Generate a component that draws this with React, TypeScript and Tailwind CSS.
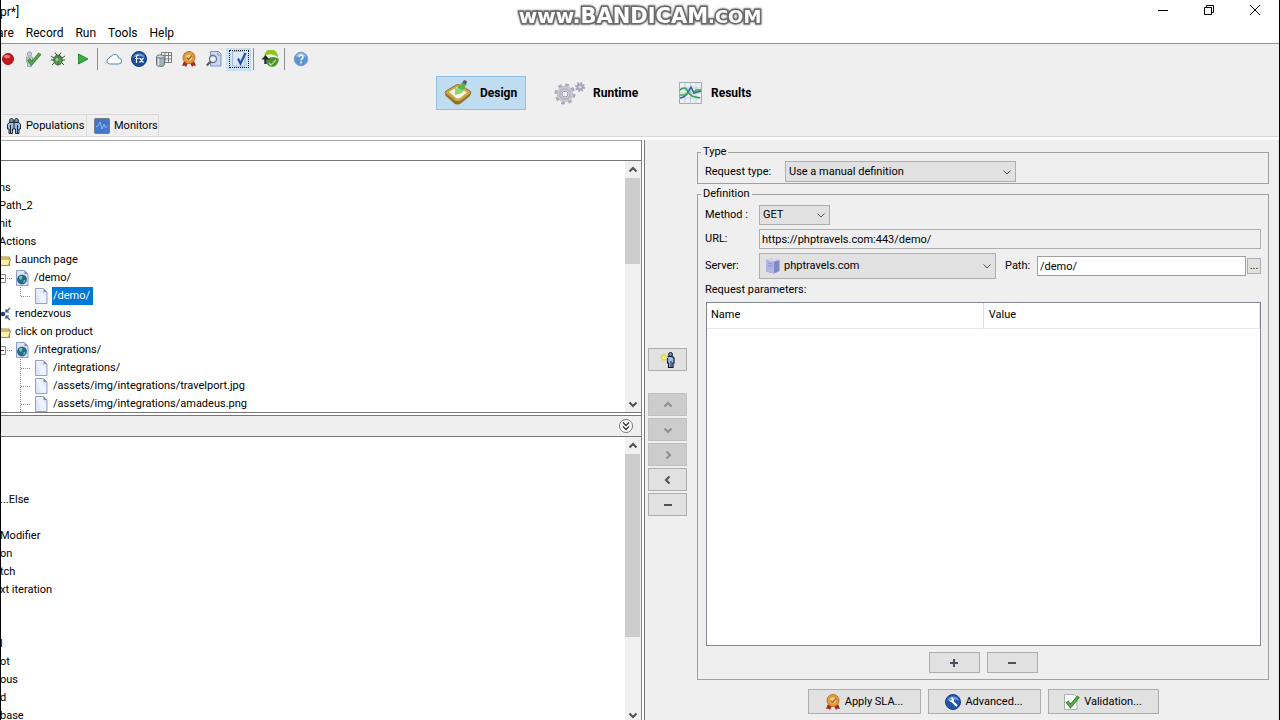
import type { ReactNode } from 'react';

const BTN = 'flex items-center justify-center border border-[#adadad] bg-[#e1e1e1]';
const BTN_OFF = 'flex items-center justify-center border border-[#bfbfbf] bg-[#cccccc]';
const LINE = '#1d3f8f';

function Svg({ children, size = 16 }: { children: ReactNode; size?: number }) {
  return (
    <svg width={size} height={size} viewBox="0 0 16 16" fill="none" className="shrink-0" aria-hidden="true">
      {children}
    </svg>
  );
}

function RecordIcon() {
  return (
    <Svg>
      <circle cx="8" cy="8" r="5.5" fill="#c8161d" stroke="#8f1a1a" />
      <ellipse cx="7" cy="5.5" rx="3" ry="1.8" fill="#ea7a78" />
    </Svg>
  );
}

function UserCheckIcon() {
  return (
    <Svg>
      <circle cx="4.5" cy="3" r="2.2" fill="#c3ccd6" stroke="#8d99a5" strokeWidth=".8" />
      <path d="M1.5 6h6v5h-1v4.5h-4V11h-1z" fill="#c3ccd6" stroke="#8d99a5" strokeWidth=".8" />
      <path d="M3.5 8l3 4.5L15 2.5" stroke="#2f7d2c" strokeWidth="3.4" />
      <path d="M3.5 8l3 4.5L15 2.5" stroke="#58ad4c" strokeWidth="1.8" />
    </Svg>
  );
}

function BugIcon() {
  return (
    <Svg>
      <path d="M1 5l3 2M15 5l-3 2M1 9h14M2 14l3-3M14 14l-3-3M5 1.500l2 3M11 1.500l-2 3" stroke="#3f4a35" />
      <ellipse cx="8" cy="9" rx="4.200" ry="5" fill="#5c9a55" stroke="#345f31" />
      <path d="M5 6h6M8 6v8" stroke="#345f31" strokeWidth=".8" />
      <ellipse cx="7" cy="8.500" rx="1.500" ry="2" fill="#95c88b" />
    </Svg>
  );
}

function PlayIcon() {
  return (
    <Svg>
      <path d="M3.500 3l9.500 5-9.500 5z" fill="#3fae3c" stroke="#2c8a35" />
    </Svg>
  );
}

function CloudIcon() {
  return (
    <Svg>
      <path d="M3.500 13a3 3 0 0 1-.3-5.900 2.500 2.500 0 0 1 2.300-2 3.800 3.800 0 0 1 7 1.900 3 3 0 0 1 .2 6z" fill="#f8fbfd" stroke="#5b87a5" />
    </Svg>
  );
}

function FxIcon() {
  return (
    <Svg>
      <circle cx="8" cy="8" r="7.500" fill="#1c4f9c" stroke="#173c78" />
      <path d="M2 6.500a6.500 6.500 0 0 1 12 0q-6-3-12 0z" fill="#6f9bd2" />
      <path d="M7.500 4.500c-2-.5-2 1-2 2.500v5M4 7.500h3.500M8.500 7l4 4.500M12.500 7l-4 4.500" stroke="#fff" strokeWidth="1.200" />
    </Svg>
  );
}

function DataIcon() {
  return (
    <Svg>
      <path d="M5.500 1.500h10v10h-10zM5.500 4.500h10M5.500 8h10M9 1.500v10M12.500 1.500v10" fill="#f4f4f4" stroke="#7c7c7c" />
      <path d="M.5 5.500v8c0 2.500 8 2.500 8 0v-8" fill="#a3b1b5" stroke="#667479" />
      <path d="M2.500 7v7.500" stroke="#dce3e5" strokeWidth="1.500" />
      <ellipse cx="4.500" cy="5.500" rx="4" ry="1.600" fill="#cfd8da" stroke="#667479" />
    </Svg>
  );
}

function MedalIcon() {
  return (
    <Svg>
      <path d="M3 10L1 15l2.500-.5 1.500 1.500 2-4zM13 10l2 5-2.500-.5L11 16l-2-4z" fill="#a62a1e" />
      <circle cx="8" cy="6.500" r="6" fill="#e79a3a" stroke="#b87525" />
      <circle cx="8" cy="6.500" r="3.800" fill="#f7cc85" stroke="#d18a32" strokeWidth=".8" />
      <path d="M5.500 6.500l2 2 3.500-4" stroke="#a86317" strokeWidth="1.200" />
    </Svg>
  );
}

function SearchDocIcon() {
  return (
    <Svg>
      <path d="M4.500.5h8l2.500 2.500v12H4.500z" fill="#c9d8f0" stroke="#7b93c2" />
      <path d="M12 .5V4h3" fill="#fff" stroke="#7b93c2" />
      <circle cx="7" cy="8" r="3.500" fill="#e9f1fb" stroke="#68717f" strokeWidth="1.300" />
      <path d="M4.500 10.500L.8 14.500" stroke="#555e6c" strokeWidth="2.200" />
    </Svg>
  );
}

function CheckDocIcon() {
  return (
    <Svg>
      <path d="M1.500.5h10l2.500 2.500v12H1.500z" fill="#dbe7f7" stroke="#a4bbdb" />
      <path d="M7 7.500l2.500 5L14.500 2" stroke="#2352a8" strokeWidth="2.200" />
    </Svg>
  );
}

function UpdateIcon() {
  return (
    <svg width="18" height="18" viewBox="0 0 18 18" fill="none" aria-hidden="true">
      <path d="M3 6a7 7 0 0 1 14 1q-7-5-14-1z" fill="#8fc31f" />
      <path d="M6 9q6-4 12 0-1 7-7 8-3 0-5-3z" fill="#4c8f2f" />
      <path d="M8 13l2 2 5-5" stroke="#b7dd7a" strokeWidth="1.300" />
      <path d="M4.500 14V9" stroke="#1f2b22" strokeWidth="2.400" />
      <path d="M.5 9.500l4-4.500 4 4.500z" fill="#1f2b22" />
    </svg>
  );
}

function HelpIcon() {
  return (
    <Svg>
      <circle cx="8" cy="8" r="6.800" fill="#5d93d2" stroke="#7fa5cf" />
      <path d="M2.800 6a5.500 5.500 0 0 1 10.400 0q-5-2-10.400 0z" fill="#a2c4e9" />
      <path d="M6 6.200c0-2.600 4.200-2.400 4 0-.1 1.300-1.900 1.500-1.900 3" stroke="#fff" strokeWidth="1.500" />
      <circle cx="8" cy="11.500" r="1" fill="#fff" />
    </Svg>
  );
}

function PopulationIcon() {
  return (
    <Svg>
      <path d="M4 5C3 2 4 .5 5.500.5S8 2 7 5M9 5C8 2 9 .5 10.500.5S13 2 12 5" fill="#6f8fae" stroke="#1e2732" />
      <path d="M1.500 6.500L3 4.500h10l1.500 2v4.500H13v4.500H9.500V11h-3v4.500H3V11H1.500z" fill="#9dbbe0" stroke="#1e2732" />
      <path d="M4.500 7v8M11.500 7v8M8 5v6" stroke="#1e2732" />
    </Svg>
  );
}

function MonitorIcon() {
  return (
    <Svg>
      <rect x=".5" y=".5" width="15" height="15" rx="1" fill="#4376c6" stroke="#777b85" />
      <path d="M2 9l2-1 2-4 2 7 2-5 1.500 4L14 7.500" stroke="#8db8ee" />
    </Svg>
  );
}

function FolderIcon() {
  return (
    <Svg>
      <path d="M1 13.500v-10h5l1 1.500h7.500v8.500z" fill="#f7e191" stroke="#a98b3a" />
      <path d="M1 13.500L4 7h11.500l-2 6.500z" fill="#fdf0a8" stroke="#a98b3a" />
    </Svg>
  );
}

function PageIcon({ globe = false }: { globe?: boolean }) {
  return (
    <Svg>
      <path d="M2.500.5h8L14 4v11.500H2.500z" fill={globe ? '#cfdcee' : '#dfe6fa'} stroke="#93a0c4" />
      <path d="M3 1l7 0 0 4 3 3v7H8z" fill={globe ? '#dfe8f4' : '#eef2fd'} />
      <path d="M10.500.5V4H14z" fill="#7f8fba" />
      {globe && (
        <>
          <circle cx="8" cy="9.500" r="4.500" fill="#1f6d8d" stroke="#174866" strokeWidth=".7" />
          <path d="M5 7.500c1-2 3-2 3.500-1s-1 1-1 2.500-2 1-2.500-1.500zM9.500 10.500l2-1c0 2-1 3-2 3.500z" fill="#7fc3b1" />
        </>
      )}
    </Svg>
  );
}

function RendezvousIcon() {
  return (
    <Svg>
      <circle cx="8" cy="8" r="2.300" fill={LINE} />
      <path d="M15 2l-3.500 3.500M11 3v3h3M15 14l-3.500-3.500M11 13v-3h3" stroke="#3c5578" strokeWidth="1.200" />
    </Svg>
  );
}

function ServerIcon() {
  return (
    <Svg>
      <path d="M1 2L6 .5l8.500 1.500v11L9 15.500l-8-2z" fill="#8288c4" />
      <path d="M1 2l8 1.500v12l-8-2z" fill="#b0b5e4" />
      <path d="M1 2L6 .5l8.500 1.500L9 3.500z" fill="#d8daf4" />
      <path d="M2.500 5l5 1M2.500 7.500l5 1" stroke="#8e94cf" />
    </Svg>
  );
}

function WrenchIcon() {
  return (
    <Svg>
      <circle cx="8" cy="8" r="7.500" fill="#1f56ac" stroke="#1a3d7e" />
      <path d="M2 6.500a6.500 6.500 0 0 1 12 0q-6-2-12 0z" fill="#6d9cdc" />
      <path d="M7 7l5 5" stroke="#fff" strokeWidth="2.200" />
      <path d="M4 5.500l2 1L7 5.500 5.800 3.500c2-.5 4 1.500 3 4-1.500 1.500-4.500.5-4.800-2z" fill="#fff" />
    </Svg>
  );
}

function ValidIcon() {
  return (
    <Svg>
      <path d="M.5.500h10L13 3v12.500H.5z" fill="#fff" stroke="#a8b4a8" />
      <path d="M3 7.500l3.500 4.500L14.500 2.500" stroke="#2c8128" strokeWidth="3.400" />
      <path d="M3 7.500l3.500 4.500L14.500 2.500" stroke="#57ab48" strokeWidth="1.800" />
    </Svg>
  );
}

function NewUserIcon() {
  return (
    <Svg>
      <circle cx="10.500" cy="2.500" r="2" fill="#6f8fae" stroke="#10192b" />
      <path d="M7.500 5.500L8.500 4.500h4l1.500 1.500v5h-1v4.500H8.500V11h-1z" fill="#9dbbe0" stroke="#10192b" strokeWidth="1.200" />
      <path d="M11 9v6.500" stroke="#10192b" />
      <path d="M4 1v9M-.5 5.500h9M1 2.500l6 6M7 2.500l-6 6" stroke="#e6dc1a" />
      <circle cx="4" cy="5.500" r="2.200" fill="#fbf66a" stroke="#d6cb1a" strokeWidth=".6" />
    </Svg>
  );
}

function DesignIcon() {
  return (
    <svg width="28" height="28" viewBox="0 0 28 28" fill="none" aria-hidden="true">
      <path d="M1 14q0 3 2 4l8 7q3 1 5 0l10-8q1-2 1-4z" fill="#8e6f26" />
      <path d="M2 12l10-6q2-1 4 0l10 6q2 2 0 3l-9 7q-3 1.500-6 0l-9-7q-2-1.500 0-3z" fill="#caa64b" stroke="#94752b" />
      <path d="M5 13l9-5.500 9 6-7 5.500q-2 1-4 0z" fill="#fbf6e6" />
      <path d="M13 9l5-5 4 2-3 6z" fill="#55b947" />
      <path d="M11 9l9 2-2 3-7 2z" fill="#8ad873" />
      <path d="M18 4l2-3 3 1-1 4z" fill="#5d5d66" />
    </svg>
  );
}

function GearsIcon() {
  return (
    <svg width="32" height="28" viewBox="0 0 32 28" fill="none" aria-hidden="true">
      <circle cx="12" cy="15" r="9" stroke="#a9a9b8" strokeWidth="3" strokeDasharray="3.540 3.530" />
      <circle cx="12" cy="15" r="6" fill="#efeff3" stroke="#b9b9c7" strokeWidth="4.500" />
      <circle cx="12" cy="15" r="7" stroke="#d3d3de" />
      <circle cx="12" cy="15" r="3" fill="#efefef" stroke="#9696a6" />
      <circle cx="27" cy="8" r="4" stroke="#a3a3b8" strokeWidth="2" strokeDasharray="1.570 1.570" />
      <circle cx="27" cy="8" r="2.600" fill="#dcdce8" stroke="#a3a3b8" strokeWidth="2" />
    </svg>
  );
}

function ResultsIcon() {
  return (
    <svg width="24" height="24" viewBox="0 0 24 24" fill="none" aria-hidden="true">
      <path d="M.5 1.500h22v21H.5z" fill="#edf1f5" stroke="#a3a9b3" />
      <path d="M.5 7h22M.5 12h22M.5 17h22M6 1.500v21M11.500 1.500v21M17 1.500v21" stroke="#c7cdd6" />
      <path d="M1 9q5-4 7 0t5 6l8 2" stroke="#35a24c" strokeWidth="1.700" />
      <path d="M1 17q6-1 8-6l3-5 3 6 7-2" stroke="#2a62ad" strokeWidth="1.500" />
      <path d="M1 14h5l4-3M14 13l3-4h5" stroke="#35a24c" strokeWidth="1.300" />
    </svg>
  );
}

type Dir = 'up' | 'down' | 'left' | 'right';

const CHEVRONS: Record<Dir, string> = {
  up: 'M1.500 6.500L5 3l3.500 3.500',
  down: 'M1.500 3.500L5 7l3.500-3.500',
  left: 'M6.500 1.500L3 5l3.500 3.500',
  right: 'M3.500 1.500L7 5 3.500 8.500',
};

function Chevron({ dir, color = '#505050', weight = 2 }: { dir: Dir; color?: string; weight?: number }) {
  return (
    <svg width="10" height="10" viewBox="0 0 10 10" fill="none" className="shrink-0" aria-hidden="true">
      <path d={CHEVRONS[dir]} stroke={color} strokeWidth={weight} />
    </svg>
  );
}

function SignIcon({ plus = false, color = '#4a4f5c' }: { plus?: boolean; color?: string }) {
  return (
    <svg width="10" height="10" viewBox="0 0 10 10" aria-hidden="true">
      <path d={plus ? 'M1 5h8M5 1v8' : 'M1 5h8'} stroke={color} strokeWidth="2" />
    </svg>
  );
}

const toolbar: { label: string; icon: ReactNode; active?: boolean; sep?: boolean }[] = [
  { label: 'Start recording', icon: <RecordIcon /> },
  { label: 'Check virtual user', icon: <UserCheckIcon /> },
  { label: 'Debug', icon: <BugIcon /> },
  { label: 'Run', icon: <PlayIcon />, sep: true },
  { label: 'Cloud', icon: <CloudIcon /> },
  { label: 'Variables', icon: <FxIcon /> },
  { label: 'Servers', icon: <DataIcon /> },
  { label: 'SLA profiles', icon: <MedalIcon /> },
  { label: 'Search', icon: <SearchDocIcon /> },
  { label: 'Validation', icon: <CheckDocIcon />, active: true, sep: true },
  { label: 'Update', icon: <UpdateIcon />, sep: true },
  { label: 'Help', icon: <HelpIcon /> },
];

interface TreeNode {
  text: string;
  level: number;
  icon?: ReactNode;
  selected?: boolean;
  last?: boolean;
}

const tree: TreeNode[] = [
  { text: '', level: 0 },
  { text: 'ns', level: 0 },
  { text: 'Path_2', level: 0 },
  { text: 'nit', level: 0 },
  { text: 'Actions', level: 0 },
  { text: 'Launch page', level: 1, icon: <FolderIcon /> },
  { text: '/demo/', level: 2, icon: <PageIcon globe /> },
  { text: '/demo/', level: 3, icon: <PageIcon />, selected: true, last: true },
  { text: 'rendezvous', level: 1, icon: <RendezvousIcon /> },
  { text: 'click on product', level: 1, icon: <FolderIcon /> },
  { text: '/integrations/', level: 2, icon: <PageIcon globe /> },
  { text: '/integrations/', level: 3, icon: <PageIcon /> },
  { text: '/assets/img/integrations/travelport.jpg', level: 3, icon: <PageIcon /> },
  { text: '/assets/img/integrations/amadeus.png', level: 3, icon: <PageIcon /> },
];

const actions = [
  '', '', '', '...Else', '', 'Modifier', 'on', 'tch', 'xt iteration', '', '', 'l', 'ot', 'ous', 'd', 'base',
];

function TreeRow({ text, level, icon, selected, last }: TreeNode) {
  if (level === 0) {
    return <li className="-ml-0.5 h-[18px] leading-[18px]">{text}</li>;
  }
  return (
    <li className={`flex h-[18px] items-center gap-[3px] ${level === 1 ? '-ml-1.5' : ''}`}>
      <span className="flex shrink-0 items-center">
        {level === 2 && (
          <svg width="13" height="18" viewBox="0 0 13 18" fill="none" aria-hidden="true">
            <path d="M-3.500 5.500h8v8h-8z" fill="#fff" stroke="#8a8a8a" />
            <path d="M-2 9.500h5" stroke="#333" />
            <path d="M6 9.500h5" stroke="#8a8a8a" strokeDasharray="1 1" />
          </svg>
        )}
        {level === 3 && (
          <svg width="32" height="18" viewBox="0 0 32 18" fill="none" aria-hidden="true">
            <path d={last ? 'M19.500 0v10' : 'M19.500 0v18'} stroke="#8a8a8a" strokeDasharray="1 1" />
            <path d="M20 9.500h9" stroke="#8a8a8a" strokeDasharray="1 1" />
          </svg>
        )}
        {icon}
      </span>
      <span className={`px-px leading-[18px] whitespace-nowrap ${selected ? 'bg-[#0078d7] pr-[3px] text-white' : ''}`}>
        {text}
      </span>
    </li>
  );
}

function ScrollBar({ thumb, below }: { thumb: string; below: string }) {
  return (
    <div className="flex w-4 shrink-0 flex-col items-center bg-[#f0f0f0] pr-px">
      <span className="flex h-[17px] shrink-0 items-center">
        <Chevron dir="up" />
      </span>
      <div className={`w-[15px] shrink-0 bg-[#cdcdcd] ${thumb}`} />
      <div className={`flex flex-1 items-end ${below}`}>
        <Chevron dir="down" />
      </div>
    </div>
  );
}

interface DropDownProps {
  id: string;
  value: string;
  box: string;
  field?: string;
  icon?: ReactNode;
}

function DropDown({ id, value, box, field = 'pl-[3px]', icon }: DropDownProps) {
  return (
    <div className={`relative ${box}`}>
      {icon && <span className="pointer-events-none absolute inset-y-0 left-1.5 flex items-center">{icon}</span>}
      <select id={id} className={`h-full w-full appearance-none border border-[#adadad] bg-[#e1e1e1] ${field}`}>
        <option>{value}</option>
      </select>
      <span className="pointer-events-none absolute inset-y-0 right-1 flex items-center">
        <Chevron dir="down" weight={1} />
      </span>
    </div>
  );
}

function TitleBar() {
  return (
    <header className="shrink-0 border-b border-[#8e938e] bg-white text-[12px]">
      <div className="flex h-6 items-start justify-between">
        <h1 className="-ml-px leading-6">pr*]</h1>
        <div className="mr-px flex">
          <button aria-label="Minimize" className="flex h-5 w-[46px] items-center justify-center">
            <svg width="10" height="10" viewBox="0 0 10 10"><path d="M0 5.500h10" stroke="#000" /></svg>
          </button>
          <button aria-label="Restore" className="flex h-5 w-[46px] items-center justify-center">
            <svg width="10" height="10" viewBox="0 0 10 10" fill="none">
              <path d="M.5 2.500h7v7h-7zM2.500 2.500v-2h7v7h-2" stroke="#000" />
            </svg>
          </button>
          <button aria-label="Close" className="flex h-5 w-[46px] items-center justify-center">
            <svg width="10" height="10" viewBox="0 0 10 10"><path d="M0 0l10 10M10 0L0 10" stroke="#000" /></svg>
          </button>
        </div>
      </div>
      <nav className="-ml-1 flex h-[19px] items-center gap-3 leading-[19px]">
        <button>are</button>
        <button>Record</button>
        <button>Run</button>
        <button>Tools</button>
        <button>Help</button>
      </nav>
    </header>
  );
}

function Toolbar() {
  return (
    <div className="-ml-1.5 flex h-[30px] items-center">
      {toolbar.map(({ label, icon, active, sep }) => (
        <div key={label} className="flex items-center">
          <button
            aria-label={label}
            className={`flex h-[23px] w-[25px] items-center justify-center ${active ? 'border border-[#c0dcf0] bg-[#cfe4f5]' : ''}`}
          >
            {active ? <span className="flex border border-dotted border-black px-px">{icon}</span> : icon}
          </button>
          {sep && <span className="mx-[2px] h-[22px] w-0.5 border-l border-[#8c8c8c]" />}
        </div>
      ))}
    </div>
  );
}

function LeftPanel() {
  return (
    <section className="flex min-h-0 flex-col border-r border-[#828282]">
      <input aria-label="Filter" className="h-[21px] shrink-0 border-t border-b border-t-[#a9a9a9] border-b-[#777] bg-white px-1 outline-none" />
      <div className="flex h-[252px] shrink-0 border-b border-[#777]">
        <ul className="min-w-0 flex-1 overflow-hidden bg-white">
          {tree.map((node, i) => (
            <TreeRow key={i} {...node} />
          ))}
        </ul>
        <ScrollBar thumb="h-[86px]" below="pb-[3px]" />
      </div>
      <div className="mt-0.5 flex h-[22px] shrink-0 items-center justify-end border-y border-[#777] bg-[#efefef] pr-2">
        <button aria-label="Collapse" className="flex size-[14px] items-center justify-center rounded-full border border-[#777] bg-white">
          <svg width="8" height="10" viewBox="0 0 8 10" fill="none">
            <path d="M1 1.500l3 3 3-3M1 5.500l3 3 3-3" stroke="#333" strokeWidth="1.300" />
          </svg>
        </button>
      </div>
      <div className="flex min-h-0 flex-1">
        <ul className="-ml-px min-w-0 flex-1 overflow-hidden bg-white">
          {actions.map((text, i) => (
            <li key={i} className="h-[18px] leading-[18px]">{text}</li>
          ))}
        </ul>
        <ScrollBar thumb="h-[183px]" below="" />
      </div>
    </section>
  );
}

function SideButtons() {
  return (
    <div className="flex w-[52px] shrink-0 flex-col justify-center gap-0.5 pt-1 pr-[10px] pl-[3px]">
      <button aria-label="New virtual user" className={`${BTN} mb-5 h-[23px]`}><NewUserIcon /></button>
      <button aria-label="Move up" disabled className={`${BTN_OFF} h-[23px]`}><Chevron dir="up" color="#8f8f8f" /></button>
      <button aria-label="Move down" disabled className={`${BTN_OFF} h-[23px]`}><Chevron dir="down" color="#8f8f8f" /></button>
      <button aria-label="Move right" disabled className={`${BTN_OFF} h-[23px]`}><Chevron dir="right" color="#8f8f8f" /></button>
      <button aria-label="Move left" className={`${BTN} h-[23px]`}><Chevron dir="left" /></button>
      <button aria-label="Remove" className={`${BTN} h-[23px]`}><SignIcon color="#505050" /></button>
    </div>
  );
}

function RequestForm() {
  return (
    <form className="flex min-w-0 flex-1 flex-col pt-[5px] pr-[9px] pb-1.5">
      <fieldset className="mb-[3px] border border-[#a0a0a0] px-[7px] pb-px">
        <legend className="-ml-1 px-0.5 leading-[14px]">Type</legend>
        <div className="flex items-center pt-0.5">
          <label htmlFor="type" className="w-20 shrink-0">Request type:</label>
          <DropDown id="type" value="Use a manual definition" box="h-[21px] w-[231px]" />
        </div>
      </fieldset>
      <fieldset className="flex min-h-0 flex-1 flex-col border border-[#a0a0a0] px-[7px] pb-[6px]">
        <legend className="-ml-1 px-0.5 leading-[14px]">Definition</legend>
        <div className="flex h-full flex-col">
          <div className="flex items-center pt-1">
            <label htmlFor="method" className="w-[54px] shrink-0">Method :</label>
            <DropDown id="method" value="GET" box="h-5 w-[71px]" />
          </div>
          <div className="flex items-center pt-1">
            <label htmlFor="url" className="w-[54px] shrink-0">URL:</label>
            <input id="url" readOnly value="https://phptravels.com:443/demo/" className="h-5 min-w-0 flex-1 border border-[#adadad] bg-[#efefef] px-0.5" />
          </div>
          <div className="flex items-center pt-1">
            <label htmlFor="server" className="w-[54px] shrink-0">Server:</label>
            <DropDown id="server" value="phptravels.com" box="h-[26px] w-[237px]" field="pl-6" icon={<ServerIcon />} />
            <label htmlFor="path" className="ml-[9px] w-8 shrink-0">Path:</label>
            <input id="path" defaultValue="/demo/" className="h-5 min-w-0 flex-1 border border-[#a0a0a0] bg-white px-0.5" />
            <button type="button" className="ml-px flex h-4 w-[14px] items-center justify-center border border-[#adadad] bg-[#e1e1e1]">...</button>
          </div>
          <h2 className="pt-[3px] pb-1 leading-4">Request parameters:</h2>
          <div className="ml-px min-h-0 flex-1 border border-[#828790] bg-white">
            <table className="w-full table-fixed">
              <thead>
                <tr className="h-[25px] border-b border-[#e8e8e8] text-left">
                  <th className="border-r border-[#e0e0e0] px-1 font-normal">Name</th>
                  <th className="border-r border-[#e0e0e0] px-[5px] font-normal">Value</th>
                </tr>
              </thead>
              <tbody />
            </table>
          </div>
          <div className="flex justify-center gap-[7px] pt-[6px]">
            <button type="button" aria-label="Add parameter" className={`${BTN} h-[21px] w-[51px]`}><SignIcon plus /></button>
            <button type="button" aria-label="Remove parameter" className={`${BTN} h-[21px] w-[51px]`}><SignIcon /></button>
          </div>
        </div>
      </fieldset>
      <div className="flex justify-center gap-[7px] pt-[9px]">
        <button type="button" className={`${BTN} h-[25px] w-[113px] gap-1`}><MedalIcon />Apply SLA...</button>
        <button type="button" className={`${BTN} h-[25px] w-[113px] gap-1`}><WrenchIcon />Advanced...</button>
        <button type="button" className={`${BTN} h-[25px] w-[111px] gap-1`}><ValidIcon />Validation...</button>
      </div>
    </form>
  );
}

export default function App() {
  return (
    <div className="relative flex h-screen w-full flex-col overflow-hidden border-x border-black bg-white font-['Roboto','Noto_Sans',sans-serif] text-[11px] leading-4 text-black">
      <TitleBar />
      <div className="shrink-0 border-b border-[#d9d9d9] bg-[#efefef]">
        <Toolbar />
        <div className="flex gap-[25px] pt-0.5 pb-1 pl-[435px] text-[12px] font-bold">
          <button className="flex h-[34px] w-[90px] items-center gap-2 border border-[#90c0e4] bg-[#bfdcf1] pl-[7px]">
            <DesignIcon />Design
          </button>
          <button className="flex h-[34px] w-[102px] items-center gap-2 pl-0.5">
            <GearsIcon />Runtime
          </button>
          <button className="flex h-[34px] w-[90px] items-center gap-2 pl-px">
            <ResultsIcon />Results
          </button>
        </div>
        <div className="flex h-[22px]">
          <button className="flex w-[86px] items-center gap-1 border-t border-r border-[#d9d9d9] pl-[5px]">
            <PopulationIcon />Populations
          </button>
          <button className="flex w-[72px] items-center gap-1 border-t border-r border-[#d9d9d9] pl-[7px]">
            <MonitorIcon />Monitors
          </button>
        </div>
      </div>
      <main className="grid min-h-0 flex-1 grid-cols-[641fr_637fr] pt-[3px]">
        <LeftPanel />
        <div className="ml-0.5 flex min-h-0 min-w-0 border-r border-l border-r-[#dcdcdc] border-l-[#777] bg-[#efefef]">
          <SideButtons />
          <RequestForm />
        </div>
      </main>
      <div className="pointer-events-none absolute top-1 left-1/2 flex -translate-x-1/2 items-baseline font-['DejaVu_Sans'] leading-6 font-bold text-white [-webkit-text-stroke:3px_#6a6a6a] [paint-order:stroke_fill] drop-shadow-[0_0_1px_#666]">
        <span className="text-[20px]">www.</span>
        <span className="text-[21px]">BANDICAM</span>
        <span className="text-[18px]">.COM</span>
      </div>
    </div>
  );
}
